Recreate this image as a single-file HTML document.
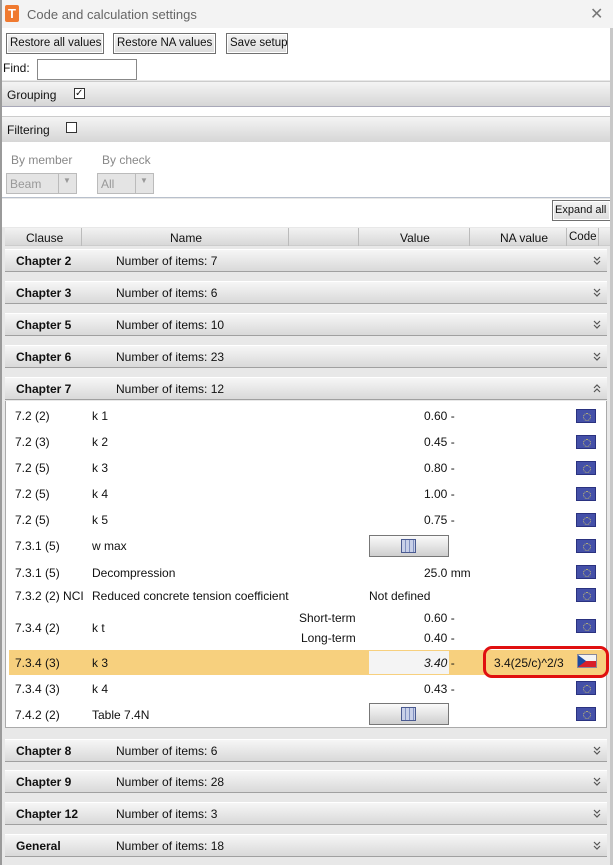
<!DOCTYPE html>
<html><head><style>
*{margin:0;padding:0;box-sizing:border-box}
body{width:613px;height:865px;background:#e8e8e8;font-family:"Liberation Sans",sans-serif;font-size:12px;color:#111;position:relative;overflow:hidden}
.a{position:absolute;white-space:nowrap}
.btn{position:absolute;height:21px;border:1px solid #707070;background:linear-gradient(#f4f4f4,#dcdcdc);font-size:11.5px;line-height:19px;padding:0 3px;box-shadow:inset 0 0 0 1px #fff;white-space:nowrap;overflow:hidden}
.bar{position:absolute;left:5px;width:602px;height:23px;background:linear-gradient(#f6f6f6,#d9d9d9);border-bottom:1px solid #a0a0a0;border-top:1px solid #fff}
.bar b{position:absolute;left:11px;top:4px;font-size:12px}
.bar span{position:absolute;left:111px;top:4px}
.bar svg{position:absolute;right:6px;top:6px}
.eu{position:absolute;left:576px;width:20px;height:14px;background:#4450a8;border:1px solid #2a3280}
.eu:after{content:"";position:absolute;left:6px;top:3px;width:6px;height:6px;border:1px dotted #c8c070;border-radius:50%}
.cb{position:absolute;width:11px;height:11px;border:1px solid #333;background:#fff}
</style></head><body>
<svg width="0" height="0" style="position:absolute"><defs>
<symbol id="dn" viewBox="0 0 8 10"><path d="M1 1L4 4L7 1M1 5L4 8L7 5" fill="none" stroke="#555" stroke-width="1.2"/></symbol>
<symbol id="up" viewBox="0 0 8 10"><path d="M1 4L4 1L7 4M1 8L4 5L7 8" fill="none" stroke="#555" stroke-width="1.2"/></symbol>
</defs></svg>
<div class="a" style="left:0;top:0;width:613px;height:28px;background:#f3f3f3"></div>
<div class="a" style="left:5px;top:5px;width:14px;height:17px;background:#f07a30;border-radius:2px;color:#fff;font-size:13px;text-align:center;line-height:17px;font-weight:bold">T</div>
<div class="a" style="left:27px;top:7px;color:#666;font-size:13px">Code and calculation settings</div>
<div class="a" style="left:590px;top:4px;font-size:16px;color:#777">✕</div>
<div class="a" style="left:2px;top:28px;width:609px;height:52px;background:#fff"></div>
<div class="btn" style="left:6px;top:33px;width:98px">Restore all values</div>
<div class="btn" style="left:113px;top:33px;width:103px">Restore NA values</div>
<div class="btn" style="left:226px;top:33px;width:62px">Save setup</div>
<div class="a" style="left:3px;top:61px">Find:</div>
<div class="a" style="left:37px;top:59px;width:100px;height:21px;border:1px solid #888;background:#fff"></div>
<div class="a" style="left:2px;top:81px;width:608px;height:26px;background:linear-gradient(#f4f4f4,#d6d6d6);border-top:1px solid #ccc;border-bottom:1px solid #a8a8b8"></div>
<div class="a" style="left:7px;top:88px">Grouping</div>
<div class="cb" style="left:74px;top:88px;font-size:10px;line-height:9px">✓</div>
<div class="a" style="left:2px;top:107px;width:608px;height:9px;background:#fff"></div>
<div class="a" style="left:2px;top:116px;width:608px;height:26px;background:linear-gradient(#f4f4f4,#d6d6d6);border-top:1px solid #ccc"></div>
<div class="a" style="left:7px;top:123px">Filtering</div>
<div class="cb" style="left:66px;top:122px"></div>
<div class="a" style="left:2px;top:142px;width:608px;height:56px;background:#fff;border-bottom:1px solid #b8c0cc"></div>
<div class="a" style="left:11px;top:153px;color:#888">By member</div>
<div class="a" style="left:102px;top:153px;color:#888">By check</div>
<div class="a" style="left:6px;top:173px;width:71px;height:21px;border:1px solid #bbb;background:#e4e4e4;color:#999;padding:3px 3px">Beam<span style="position:absolute;left:51px;top:0;height:19px;border-left:1px solid #bbb;padding:2px 4px;font-size:8px">▼</span></div>
<div class="a" style="left:97px;top:173px;width:57px;height:21px;border:1px solid #bbb;background:#e4e4e4;color:#999;padding:3px 3px">All<span style="position:absolute;left:37px;top:0;height:19px;border-left:1px solid #bbb;padding:2px 4px;font-size:8px">▼</span></div>
<div class="a" style="left:2px;top:199px;width:608px;height:28px;background:#fff"></div>
<div class="btn" style="left:552px;top:200px;width:59px;padding:0 2px;font-size:11px">Expand all</div>
<div class="a" style="left:5px;top:228px;width:605px;height:18px;background:linear-gradient(#f2f2f2,#d8d8d8);border-bottom:1px solid #ccc"></div>
<div class="a" style="left:81px;top:228px;height:18px;border-left:1px solid #bbb"></div>
<div class="a" style="left:288px;top:228px;height:18px;border-left:1px solid #bbb"></div>
<div class="a" style="left:358px;top:228px;height:18px;border-left:1px solid #bbb"></div>
<div class="a" style="left:469px;top:228px;height:18px;border-left:1px solid #bbb"></div>
<div class="a" style="left:566px;top:228px;height:18px;border-left:1px solid #bbb"></div>
<div class="a" style="left:598px;top:228px;height:18px;border-left:1px solid #bbb"></div>
<div class="a" style="left:26px;top:231px">Clause</div>
<div class="a" style="left:170px;top:231px">Name</div>
<div class="a" style="left:400px;top:231px">Value</div>
<div class="a" style="left:500px;top:231px">NA value</div>
<div class="a" style="left:569px;top:231px;font-size:11.5px">Code</div>
<div class="a" style="left:0;top:0;width:2px;height:865px;background:#9a9a9a"></div>
<div class="a" style="left:610px;top:28px;width:3px;height:837px;background:#c8c8c8"></div>

<div class="bar" style="top:249px"><b>Chapter 2</b><span>Number of items: 7</span><svg width="8" height="10"><use href="#dn"/></svg></div>
<div class="bar" style="top:281px"><b>Chapter 3</b><span>Number of items: 6</span><svg width="8" height="10"><use href="#dn"/></svg></div>
<div class="bar" style="top:313px"><b>Chapter 5</b><span>Number of items: 10</span><svg width="8" height="10"><use href="#dn"/></svg></div>
<div class="bar" style="top:345px"><b>Chapter 6</b><span>Number of items: 23</span><svg width="8" height="10"><use href="#dn"/></svg></div>
<div class="bar" style="top:377px"><b>Chapter 7</b><span>Number of items: 12</span><svg width="8" height="10"><use href="#up"/></svg></div>

<div class="a" style="left:5px;top:401px;width:602px;height:327px;background:#fff;border:1px solid #aaa;border-top:none"></div>
<div class="a" style="left:9px;top:650px;width:599px;height:25px;background:#f7d07e"></div>
<div class="a" style="left:369px;top:651px;width:80px;height:23px;background:#f4f4f4"></div>

<div class="a" style="left:15px;top:409px">7.2 (2)</div><div class="a" style="left:92px;top:409px">k 1</div><div class="a" style="left:424px;top:409px">0.60 -</div><div class="eu" style="top:409px"></div>
<div class="a" style="left:15px;top:435px">7.2 (3)</div><div class="a" style="left:92px;top:435px">k 2</div><div class="a" style="left:424px;top:435px">0.45 -</div><div class="eu" style="top:435px"></div>
<div class="a" style="left:15px;top:461px">7.2 (5)</div><div class="a" style="left:92px;top:461px">k 3</div><div class="a" style="left:424px;top:461px">0.80 -</div><div class="eu" style="top:461px"></div>
<div class="a" style="left:15px;top:487px">7.2 (5)</div><div class="a" style="left:92px;top:487px">k 4</div><div class="a" style="left:424px;top:487px">1.00 -</div><div class="eu" style="top:487px"></div>
<div class="a" style="left:15px;top:513px">7.2 (5)</div><div class="a" style="left:92px;top:513px">k 5</div><div class="a" style="left:424px;top:513px">0.75 -</div><div class="eu" style="top:513px"></div>
<div class="a" style="left:15px;top:539px">7.3.1 (5)</div><div class="a" style="left:92px;top:539px">w max</div>
<div class="a" style="left:369px;top:535px;width:80px;height:22px;border:1px solid #777;background:linear-gradient(#fafafa,#cfcfcf)"><div class="a" style="left:31px;top:3px;width:15px;height:14px;border:1px solid #4a5a90;background:repeating-linear-gradient(90deg,#c8d0e8 0 3px,#8090c0 3px 4px)"></div></div><div class="eu" style="top:539px"></div>
<div class="a" style="left:15px;top:566px">7.3.1 (5)</div><div class="a" style="left:92px;top:566px">Decompression</div><div class="a" style="left:424px;top:566px">25.0 mm</div><div class="eu" style="top:565px"></div>
<div class="a" style="left:15px;top:589px">7.3.2 (2) NCI</div><div class="a" style="left:92px;top:589px">Reduced concrete tension coefficient</div><div class="a" style="left:369px;top:589px">Not defined</div><div class="eu" style="top:588px"></div>
<div class="a" style="left:299px;top:611px">Short-term</div><div class="a" style="left:424px;top:611px">0.60 -</div>
<div class="a" style="left:15px;top:621px">7.3.4 (2)</div><div class="a" style="left:92px;top:621px">k t</div><div class="eu" style="top:619px"></div>
<div class="a" style="left:301px;top:631px">Long-term</div><div class="a" style="left:424px;top:631px">0.40 -</div>
<div class="a" style="left:15px;top:656px">7.3.4 (3)</div><div class="a" style="left:92px;top:656px">k 3</div><div class="a" style="left:424px;top:656px"><em>3.40</em> -</div>
<div class="a" style="left:483px;top:646px;width:126px;height:32px;border:3px solid #e01010;border-radius:9px"></div>
<div class="a" style="left:494px;top:656px">3.4(25/c)^2/3</div>
<div class="a" style="left:577px;top:654px;width:20px;height:14px;border:1px solid #889;background:linear-gradient(#f4f4f4 50%,#d8202a 50%)"><div style="width:0;height:0;border-top:6px solid transparent;border-bottom:6px solid transparent;border-left:8px solid #1a4aa0"></div></div>
<div class="a" style="left:15px;top:682px">7.3.4 (3)</div><div class="a" style="left:92px;top:682px">k 4</div><div class="a" style="left:424px;top:682px">0.43 -</div><div class="eu" style="top:681px"></div>
<div class="a" style="left:15px;top:708px">7.4.2 (2)</div><div class="a" style="left:92px;top:708px">Table 7.4N</div>
<div class="a" style="left:369px;top:703px;width:80px;height:22px;border:1px solid #777;background:linear-gradient(#fafafa,#cfcfcf)"><div class="a" style="left:31px;top:3px;width:15px;height:14px;border:1px solid #4a5a90;background:repeating-linear-gradient(90deg,#c8d0e8 0 3px,#8090c0 3px 4px)"></div></div><div class="eu" style="top:707px"></div>

<div class="bar" style="top:739px"><b>Chapter 8</b><span>Number of items: 6</span><svg width="8" height="10"><use href="#dn"/></svg></div>
<div class="bar" style="top:770px"><b>Chapter 9</b><span>Number of items: 28</span><svg width="8" height="10"><use href="#dn"/></svg></div>
<div class="bar" style="top:802px"><b>Chapter 12</b><span>Number of items: 3</span><svg width="8" height="10"><use href="#dn"/></svg></div>
<div class="bar" style="top:834px"><b>General</b><span>Number of items: 18</span><svg width="8" height="10"><use href="#dn"/></svg></div>
</body></html>
